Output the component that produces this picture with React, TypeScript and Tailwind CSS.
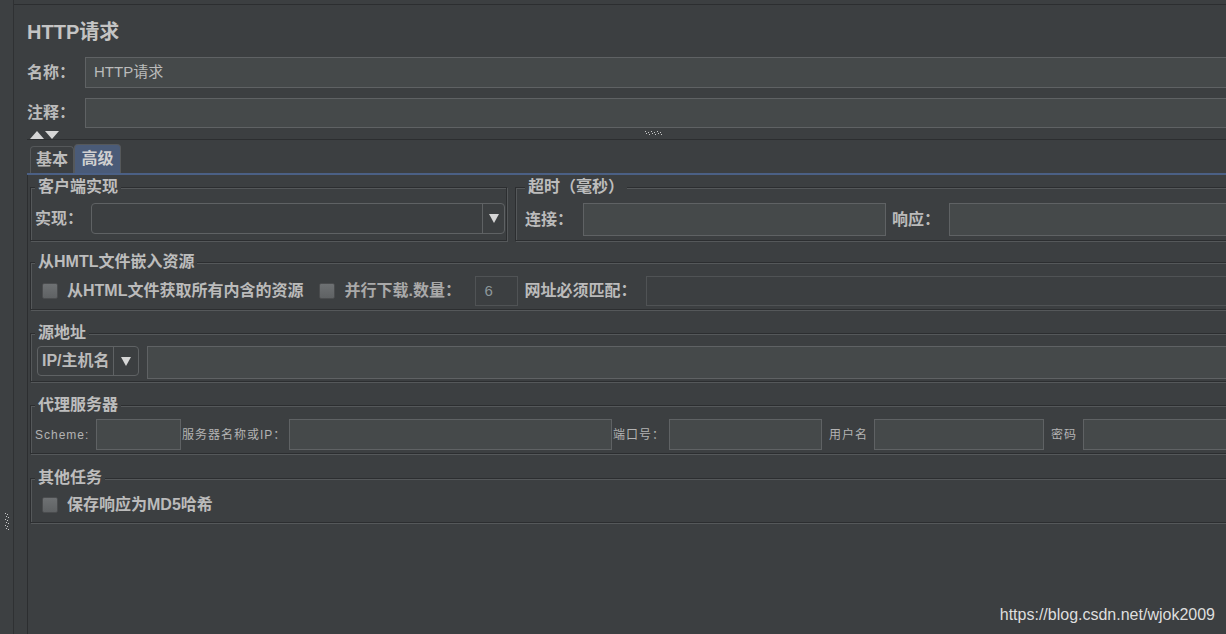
import type { ReactNode } from 'react';
import clsx from 'clsx';

const TEXT = 'text-[#bbbbbb]';

function Group({
  title,
  className,
  children,
}: {
  title: string;
  className?: string;
  children: ReactNode;
}) {
  return (
    <fieldset
      className={clsx(
        'min-w-0 border border-[#2c2e30] shadow-[inset_1px_1px_0_#55585a,1px_1px_0_#55585a]',
        className
      )}
    >
      <legend className="bg-[#3c3f41] px-[3px] text-[16px] font-bold leading-[18px] text-[#bdbdbd]">
        {title}
      </legend>
      {children}
    </fieldset>
  );
}

function Field({ className, value, dim }: { className?: string; value?: string; dim?: boolean }) {
  return (
    <div
      className={clsx(
        'flex items-center border px-[8px] text-[15px]',
        dim
          ? 'border-[#505355] bg-[#3c3f41] text-[#8d979b]'
          : 'border-[#5f6264] bg-[#45494a] text-[#bbbbbb]',
        className
      )}
    >
      {value}
    </div>
  );
}

function Arrow({ className }: { className?: string }) {
  return (
    <svg viewBox="0 0 10 9" className={clsx('h-[9px] w-[10px]', className)}>
      <path d="M0 0h10L5 9z" fill="#d6d6d6" />
    </svg>
  );
}

function Check() {
  return (
    <span className="block h-[16px] w-[16px] shrink-0 rounded-[2px] border border-[#4a4c4e] bg-[linear-gradient(#6e7173,#5f6264)]" />
  );
}

function Grip({ vertical }: { vertical?: boolean }) {
  const dots = [];
  for (let i = 0; i < 6; i++) {
    for (let j = 0; j < 2; j++) {
      dots.push(
        vertical ? (
          <rect key={`${i}-${j}`} x={j * 2 + (i % 2)} y={i * 3 + j} width="1" height="1" fill="#c8c8c8" />
        ) : (
          <rect key={`${i}-${j}`} x={i * 3 + j} y={j * 2 + (i % 2)} width="1" height="1" fill="#c8c8c8" />
        )
      );
    }
  }
  return vertical ? (
    <svg width="5" height="19" viewBox="0 0 5 19" className="block">
      {dots}
    </svg>
  ) : (
    <svg width="19" height="5" viewBox="0 0 19 5" className="block">
      {dots}
    </svg>
  );
}

export default function App() {
  return (
    <div
      className={clsx(
        "relative flex h-[634px] w-full overflow-hidden bg-[#3c3f41] font-['Liberation_Sans','Noto_Sans_CJK_SC',sans-serif]",
        TEXT
      )}
    >
      {/* left splitter strip */}
      <div className="flex w-[14px] shrink-0 flex-col border-r border-[#2f3133] bg-[#3d4042] pl-[5px] pt-[513px]">
        <Grip vertical />
      </div>

      {/* main editor */}
      <div className="mt-[4px] flex w-[1240px] shrink-0 flex-col border-t border-[#2c2e30] pl-[13px]">
        <h1 className="mt-[15px] h-[24px] text-[20px] font-bold leading-[24px] text-[#c4c4c4]">HTTP请求</h1>

        <div className="mt-[13px] flex h-[31px] items-center">
          <span className="w-[58px] text-[16px] font-bold">名称：</span>
          <Field className="h-[31px] flex-1" value="HTTP请求" />
        </div>
        <div className="mt-[10px] flex h-[30px] items-center">
          <span className="w-[58px] text-[16px] font-bold">注释：</span>
          <Field className="h-[30px] flex-1" />
        </div>

        <div className="flex h-[11px] items-center">
          <div className="ml-[3px] flex w-[615px] gap-[1px] pt-[3px]">
            <svg viewBox="0 0 14 8" className="h-[8px] w-[14px]">
              <path d="M7 0L14 8H0z" fill="#d6d6d6" />
            </svg>
            <svg viewBox="0 0 14 8" className="h-[8px] w-[14px]">
              <path d="M0 0h14L7 8z" fill="#d6d6d6" />
            </svg>
          </div>
          <Grip />
        </div>
        <div className="h-px bg-[#2c2e30]" />

        {/* tabs */}
        <div className="mt-[4px] flex items-end pl-[3px]">
          <div className="flex h-[27px] w-[44px] items-center justify-center rounded-t-[4px] border border-b-0 border-[#55585a] text-[16px] font-bold">
            基本
          </div>
          <div className="flex h-[29px] w-[47px] items-center justify-center rounded-t-[4px] border border-b-0 border-[#55585a] bg-[#4a5b78] text-[16px] font-bold text-[#d0d0d0]">
            高级
          </div>
        </div>
        <div className="h-[2px] bg-[#4b6085]" />

        <div className="flex flex-1 flex-col border-l border-[#2c2e30] pl-[2px]">
          {/* row 1 */}
          <div className="mt-[3px] flex gap-[8px]">
            <Group title="客户端实现" className="w-[477px] shrink-0 pb-[6px] pl-[4px] pr-[1px]">
              <div className="mt-[7px] flex items-center">
                <span className="w-[56px] text-[16px] font-bold">实现：</span>
                <div className="flex h-[31px] flex-1 rounded-[4px] border border-[#5f6264]">
                  <div className="flex-1" />
                  <div className="flex w-[22px] items-center justify-center border-l border-[#5f6264]">
                    <Arrow />
                  </div>
                </div>
              </div>
            </Group>
            <Group title="超时（毫秒）" className="flex-1 pb-[4px] pl-[9px]">
              <div className="mt-[7px] flex items-center">
                <span className="w-[58px] text-[16px] font-bold">连接：</span>
                <Field className="h-[33px] w-[303px]" />
                <span className="ml-[6px] w-[57px] text-[16px] font-bold">响应：</span>
                <Field className="h-[33px] flex-1" />
              </div>
            </Group>
          </div>

          {/* row 2 */}
          <Group title="从HMTL文件嵌入资源" className="mt-[12px] pb-[3px] pl-[4px]">
            <div className="mt-[5px] flex h-[30px] items-center">
              <span className="ml-[7px]">
                <Check />
              </span>
              <span className="ml-[9px] text-[16px] font-bold">从HTML文件获取所有内含的资源</span>
              <span className="ml-[16px]">
                <Check />
              </span>
              <span className="ml-[9px] w-[131px] text-[16px] font-bold text-[#a9a9a9]">并行下载.数量：</span>
              <Field dim className="h-[30px] w-[43px]" value="6" />
              <span className="ml-[6px] w-[122px] text-[16px] font-bold">网址必须匹配：</span>
              <Field dim className="h-[30px] flex-1" />
            </div>
          </Group>

          {/* row 3 */}
          <Group title="源地址" className="mt-[14px] pb-[2px] pl-[4px]">
            <div className="mt-[4px] flex items-start">
              <div className="ml-[2px] flex h-[30px] w-[102px] rounded-[4px] border border-[#5f6264]">
                <div className="flex flex-1 items-center pl-[4px] text-[16px] font-bold">IP/主机名</div>
                <div className="flex w-[25px] items-center justify-center border-l border-[#5f6264]">
                  <Arrow />
                </div>
              </div>
              <Field className="ml-[8px] h-[33px] flex-1" />
            </div>
          </Group>

          {/* row 4 */}
          <Group title="代理服务器" className="mt-[14px] pb-[3px] pl-[4px]">
            <div className="mt-[5px] flex items-center text-[12px] tracking-[1px] text-[#b3b3b3]">
              <span className="w-[61px]">Scheme:</span>
              <Field className="h-[31px] w-[85px]" />
              <span className="ml-[1px] w-[107px]">服务器名称或IP：</span>
              <Field className="h-[31px] w-[323px]" />
              <span className="ml-[1px] w-[56px]">端口号：</span>
              <Field className="h-[31px] w-[153px]" />
              <span className="ml-[7px] w-[45px]">用户名</span>
              <Field className="h-[31px] w-[170px]" />
              <span className="ml-[7px] w-[32px]">密码</span>
              <Field className="h-[31px] flex-1" />
            </div>
          </Group>

          {/* row 5 */}
          <Group title="其他任务" className="mt-[15px] pb-[2px] pl-[4px]">
            <div className="mt-[3px] flex h-[30px] items-center">
              <span className="ml-[7px]">
                <Check />
              </span>
              <span className="ml-[9px] text-[16px] font-bold">保存响应为MD5哈希</span>
            </div>
          </Group>
        </div>
      </div>

      <span className="absolute bottom-[10px] right-[11px] font-['Liberation_Sans',sans-serif] text-[16px] leading-[18px] text-[#dedede]">
        https://blog.csdn.net/wjok2009
      </span>
    </div>
  );
}
